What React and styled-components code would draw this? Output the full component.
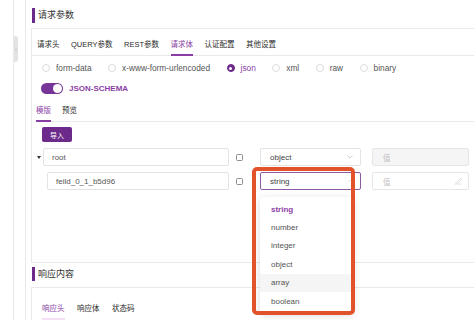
import React from 'react'
import styled, { createGlobalStyle } from 'styled-components'
import { PenLine } from 'lucide-react'

const PURPLE = '#6c2a8a'
const PURPLE_TEXT = '#8a3ea5'
const LINE = '#e9e9e9'

const GlobalStyle = createGlobalStyle`
  html, body {
    margin: 0;
    padding: 0;
    background: #fff;
  }
  body {
    font-family: "Liberation Sans", "Noto Sans CJK SC", sans-serif;
    font-size: 8px;
    color: #333;
    overflow: hidden;
  }
  * {
    box-sizing: border-box;
  }
`

const Page = styled.div`
  display: flex;
  width: 474px;
  height: 320px;
  overflow: hidden;
`

const Sidebar = styled.aside`
  position: relative;
  flex-shrink: 0;
  width: 14px;
  border-right: 1px solid ${LINE};
`

const Handle = styled.div`
  position: absolute;
  top: 36px;
  right: -5px;
  width: 4px;
  height: 26px;
  border-radius: 0 3px 3px 0;
  background: #e3e3e3;
  color: #b0b0b0;
  font-size: 6px;
  display: flex;
  align-items: center;
  justify-content: center;
`

const Main = styled.main`
  flex: 1;
  min-width: 0;
  margin-left: 11px;
  padding-left: 5px;
  border-left: 1px solid ${LINE};
  display: flex;
  flex-direction: column;
`

const SectionTitle = styled.h3`
  margin: 0;
  display: flex;
  align-items: center;
  gap: 3px;
  padding: ${p => p.$pt}px 0 ${p => p.$pb}px 1px;
  font-size: 9px;
  font-weight: normal;
  color: #333;
  line-height: ${p => p.$bar}px;

  &::before {
    content: '';
    width: 3px;
    height: ${p => p.$bar}px;
    background: ${PURPLE};
  }
`

const Card = styled.section`
  border: 1px solid ${LINE};
  border-right: none;
  height: ${p => (p.$height ? `${p.$height}px` : 'auto')};
  flex: ${p => (p.$height ? 'none' : 1)};
  padding: ${p => p.$padding || '0'};
`

const TabList = styled.div`
  display: flex;
  gap: ${p => p.$gap}px;
  margin-left: ${p => p.$ml || 0}px;
  padding-left: ${p => p.$pl || 0}px;
  border-bottom: ${p => (p.$line ? `1px solid ${LINE}` : 'none')};
`

const Tab = styled.div`
  height: ${p => p.$height}px;
  margin-bottom: ${p => (p.$line ? -1 : 0)}px;
  display: flex;
  align-items: flex-end;
  padding-bottom: 4px;
  font-size: 7.5px;
  line-height: 10px;
  white-space: nowrap;
  color: ${p => (p.$active ? PURPLE_TEXT : '#2b2b2b')};
  border-bottom: ${p => p.$bw || 2}px solid
    ${p => (p.$active ? p.$accent || PURPLE_TEXT : 'transparent')};
`

const RadioGroup = styled.div`
  display: flex;
  align-items: center;
  gap: 16.5px;
  height: 12px;
  margin-top: 6px;
  padding-left: 10px;
`

const RadioOption = styled.label`
  display: flex;
  align-items: center;
  gap: 6px;
  font-size: 8.3px;
  white-space: nowrap;
  color: ${p => (p.$checked ? PURPLE_TEXT : '#555')};
`

const RadioDot = styled.span`
  position: relative;
  width: 8px;
  height: 8px;
  border-radius: 50%;
  border: 1px solid ${p => (p.$checked ? PURPLE : '#dcdcdc')};
  background: ${p => (p.$checked ? PURPLE : '#fff')};

  &::after {
    content: '';
    display: ${p => (p.$checked ? 'block' : 'none')};
    position: absolute;
    left: 1.5px;
    top: 1.5px;
    width: 3px;
    height: 3px;
    border-radius: 50%;
    background: #fff;
  }
`

const SwitchRow = styled.div`
  display: flex;
  align-items: center;
  gap: 6px;
  height: 11px;
  margin-top: 9px;
  padding-left: 9px;
`

const Switch = styled.span`
  position: relative;
  width: 22px;
  height: 11px;
  border-radius: 6px;
  background: #773597;

  &::after {
    content: '';
    position: absolute;
    right: 1px;
    top: 1px;
    width: 9px;
    height: 9px;
    border-radius: 50%;
    background: #fff;
  }
`

const SchemaLabel = styled.span`
  font-size: 8px;
  font-weight: bold;
  color: ${PURPLE_TEXT};
`

const ImportButton = styled.button`
  display: block;
  width: 30px;
  height: 15px;
  margin: 5px 0 0 10px;
  padding: 0;
  border: none;
  border-radius: 2px;
  background: ${PURPLE};
  color: #fff;
  font-family: inherit;
  font-size: 7px;
`

const FieldRow = styled.div`
  display: flex;
  align-items: center;
  height: 18px;
  margin-top: 6px;
  padding-left: 3px;
`

const NameCell = styled.div`
  display: flex;
  align-items: center;
  width: 194px;
  height: 100%;
`

const Caret = styled.span`
  width: 8px;
  display: flex;
  justify-content: center;

  &::before {
    content: '';
    border-left: 2.5px solid transparent;
    border-right: 2.5px solid transparent;
    border-top: 3px solid #333;
  }
`

const Indent = styled.span`
  width: 12px;
`

const TextBox = styled.div`
  flex: 1;
  height: 18px;
  display: flex;
  align-items: center;
  padding: 0 8px;
  border: 1px solid #e3e3e3;
  border-radius: 2px;
  color: #555;
  font-size: 8px;
`

const CheckCell = styled.div`
  width: 31px;
  padding-left: 7px;
  display: flex;
  align-items: center;
`

const Checkbox = styled.span`
  width: 7px;
  height: 7px;
  border: 1px solid #8c8c8c;
  border-radius: 1.5px;
  background: #fff;
`

const Select = styled.div`
  position: relative;
  width: 101px;
  height: 18px;
  display: flex;
  align-items: center;
  justify-content: space-between;
  padding: 0 7px 0 9px;
  border: 1px solid ${p => (p.$open ? '#8d5aa3' : '#e3e3e3')};
  border-radius: 2px;
  color: #444;
  font-size: 8px;
`

const ValueBox = styled.div`
  width: 97px;
  height: 18px;
  margin-left: 11px;
  display: flex;
  align-items: center;
  justify-content: space-between;
  padding: 0 6px 0 10px;
  border: 1px solid #e6e6e6;
  border-radius: 2px;
  background: ${p => (p.$disabled ? '#f5f5f5' : '#fff')};
  color: #c4c4c4;
  font-size: 7.5px;
`

const Menu = styled.ul`
  position: absolute;
  top: 24px;
  left: -1px;
  z-index: 5;
  width: 93px;
  margin: 0;
  padding: 3px 0;
  list-style: none;
  background: #fff;
  border-radius: 2px;
  box-shadow: 0 2px 8px rgba(0, 0, 0, 0.15);
`

const MenuItem = styled.li`
  height: 18.4px;
  display: flex;
  align-items: center;
  padding-left: 11px;
  font-size: 8px;
  color: ${p => (p.$selected ? PURPLE_TEXT : '#555')};
  font-weight: ${p => (p.$selected ? 'bold' : 'normal')};
  background: ${p => (p.$hover ? '#f5f5f5' : 'transparent')};
`

const Callout = styled.div`
  position: absolute;
  top: -6px;
  left: -9px;
  z-index: 6;
  width: 103px;
  height: 148px;
  border: 4px solid #e2532b;
  border-radius: 5px;
  pointer-events: none;
`

const Chevron = ({ up }) => (
  <svg width="6" height="4" viewBox="0 0 6 4" fill="none">
    <path
      d={up ? 'M0.5 3.5 L3 1 L5.5 3.5' : 'M0.5 0.5 L3 3 L5.5 0.5'}
      stroke={up ? '#ddd' : '#c4c4c4'}
      strokeWidth="0.8"
    />
  </svg>
)

const requestTabs = ['请求头', 'QUERY参数', 'REST参数', '请求体', '认证配置', '其他设置']
const bodyTypes = ['form-data', 'x-www-form-urlencoded', 'json', 'xml', 'raw', 'binary']
const types = ['string', 'number', 'integer', 'object', 'array', 'boolean']
const responseTabs = ['响应头', '响应体', '状态码']

export default function App() {
  return (
    <Page>
      <GlobalStyle />
      <Sidebar>
        <Handle>‹</Handle>
      </Sidebar>
      <Main>
        <SectionTitle $pt={8} $pb={5} $bar={15}>请求参数</SectionTitle>
        <Card $height={235}>
          <TabList $gap={11.5} $pl={5} $line>
            {requestTabs.map(t => (
              <Tab key={t} $height={27} $line $active={t === '请求体'}>{t}</Tab>
            ))}
          </TabList>

          <RadioGroup>
            {bodyTypes.map(t => (
              <RadioOption key={t} $checked={t === 'json'}>
                <RadioDot $checked={t === 'json'} />
                {t}
              </RadioOption>
            ))}
          </RadioGroup>

          <SwitchRow>
            <Switch />
            <SchemaLabel>JSON-SCHEMA</SchemaLabel>
          </SwitchRow>

          <div style={{ marginTop: 8 }}>
            <TabList $gap={11} $ml={4} $line>
              <Tab $height={20} $line $active>模版</Tab>
              <Tab $height={20} $line>预览</Tab>
            </TabList>
          </div>

          <ImportButton>导入</ImportButton>

          <FieldRow>
            <NameCell>
              <Caret />
              <TextBox>root</TextBox>
            </NameCell>
            <CheckCell><Checkbox /></CheckCell>
            <Select>
              object
              <Chevron />
            </Select>
            <ValueBox $disabled>值</ValueBox>
          </FieldRow>

          <FieldRow>
            <NameCell>
              <Indent />
              <TextBox>feild_0_1_b5d96</TextBox>
            </NameCell>
            <CheckCell><Checkbox /></CheckCell>
            <Select $open>
              string
              <Chevron up />
              <Menu>
                {types.map(t => (
                  <MenuItem key={t} $selected={t === 'string'} $hover={t === 'array'}>{t}</MenuItem>
                ))}
              </Menu>
              <Callout />
            </Select>
            <ValueBox>
              值
              <PenLine size={7} color="#b5b5b5" strokeWidth={1.5} />
            </ValueBox>
          </FieldRow>
        </Card>

        <SectionTitle $pt={4} $pb={6} $bar={14}>响应内容</SectionTitle>
        <Card $padding="16px 0 0 10px">
          <TabList $gap={12.5}>
            {responseTabs.map(t => (
              <Tab key={t} $height={18} $bw={4} $accent="#f4dff6" $active={t === '响应头'}>{t}</Tab>
            ))}
          </TabList>
        </Card>
      </Main>
    </Page>
  )
}
